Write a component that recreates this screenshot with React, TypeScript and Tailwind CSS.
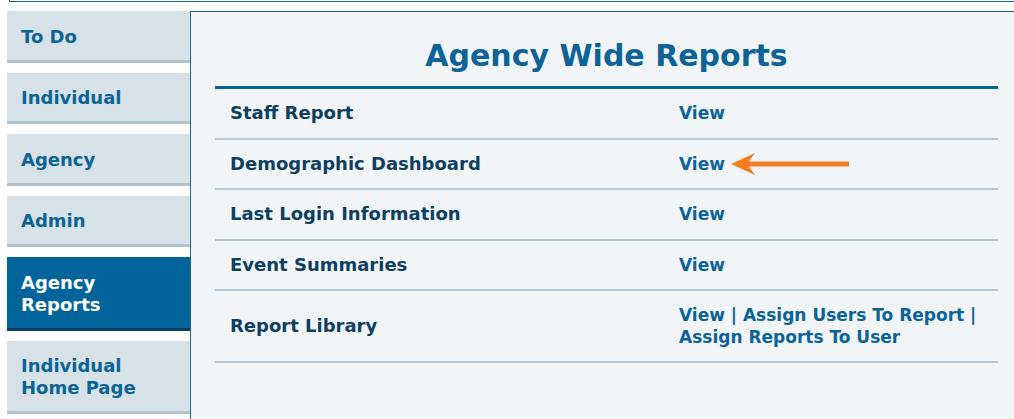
import React from 'react';

const tabs = [
  { label: 'To Do' },
  { label: 'Individual' },
  { label: 'Agency' },
  { label: 'Admin' },
  { label: 'Agency Reports', lines: ['Agency', 'Reports'], active: true },
  { label: 'Individual Home Page', lines: ['Individual', 'Home Page'] },
];

const reports = [
  { name: 'Staff Report' },
  { name: 'Demographic Dashboard', arrow: true },
  { name: 'Last Login Information' },
  { name: 'Event Summaries' },
];

function Arrow() {
  return (
    <svg width="120" height="24" viewBox="0 0 120 24" className="ml-[5px] shrink-0">
      <polygon
        points="1,12 25,1 19,9.5 119,9.5 119,14.5 19,14.5 25,23"
        fill="#f47f20"
      />
    </svg>
  );
}

export default function App() {
  return (
    <div className="min-h-screen bg-white font-['DejaVu_Sans',Verdana,sans-serif] font-bold overflow-hidden">
      {/* top frame edge */}
      <div className="ml-[9px] h-[2px] border-l border-b border-[#1a6496]" />

      <div className="flex pt-[9px]">
        {/* left tabs */}
        <div className="w-[190px] shrink-0 pl-[7px] flex flex-col">
          {tabs.map((t) => (
            <div
              key={t.label}
              className={
                t.active
                  ? 'mb-[10px] bg-[#01649a] border-b-[3px] border-[#0a3e5e] pl-[14px] pt-[14.5px] pb-[12px] text-[18px] leading-[22px] text-white'
                  : 'mb-[10px] bg-[#d6e1e8] border-b-[3px] border-[#b0c3cf] pl-[14px] pt-[14.5px] pb-[12px] text-[18px] leading-[22px] text-[#0b6397]'
              }
            >
              {t.lines ? t.lines.map((l) => <div key={l}>{l}</div>) : t.label}
            </div>
          ))}
        </div>

        {/* main panel */}
        <div className="flex-1 min-h-[420px] bg-[#f1f5f8] border-l border-t border-[#1a6496] pl-[24px]">
          <div className="w-[783px]">
            <h1 className="mt-[26px] mb-[12px] text-center text-[30px] leading-[36px] text-[#0b6397]">
              Agency Wide Reports
            </h1>
            <div className="border-t-[3px] border-[#06669b]">
              {reports.map((r) => (
                <div key={r.name} className="flex items-center h-[50.5px] border-b-2 border-[#b4c7d2] leading-[22px]">
                  <div className="w-[464px] shrink-0 pl-[15px] text-[18px] text-[#0d3f62]">{r.name}</div>
                  <div className="flex items-center text-[17px] text-[#0b6397]">
                    <span>View</span>
                    {r.arrow && <Arrow />}
                  </div>
                </div>
              ))}
              <div className="flex items-center h-[72px] border-b-2 border-[#b4c7d2] leading-[22px]">
                <div className="w-[464px] shrink-0 pl-[15px] text-[18px] text-[#0d3f62]">Report Library</div>
                <div className="text-[17px] text-[#0b6397]">
                  View | Assign Users To Report |
                  <br />
                  Assign Reports To User
                </div>
              </div>
            </div>
          </div>
        </div>
      </div>
    </div>
  );
}
